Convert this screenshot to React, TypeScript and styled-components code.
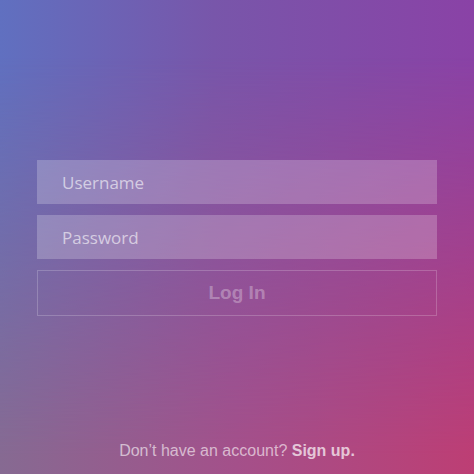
import styled, { createGlobalStyle } from 'styled-components';

const GlobalStyle = createGlobalStyle`
  html, body, #root {
    margin: 0;
    padding: 0;
    height: 100%;
  }
  body {
    font-family: 'Open Sans', 'Liberation Sans', sans-serif;
  }
`;

function App() {
  return (
    <>
      <GlobalStyle />
      <Screen>
        <Form onSubmit={(e) => e.preventDefault()}>
          <Field type='text' placeholder='Username' />
          <Field type='password' placeholder='Password' />
          <LoginButton type='submit'>Log In</LoginButton>
        </Form>
        <Footer>
          Don’t have an account? <strong>Sign up.</strong>
        </Footer>
      </Screen>
    </>
  );
}

const Screen = styled.div`
  position: relative;
  height: 100%;
  box-sizing: border-box;
  display: flex;
  flex-direction: column;
  align-items: center;
  padding: 160px 37px 14px;
  overflow: hidden;
  background: linear-gradient(to right, #6070c0 0%, #7856aa 45%, #8a42a6 100%);

  /* bottom row of the four-corner blend */
  &::before {
    content: '';
    position: absolute;
    inset: 0;
    background: linear-gradient(to right, #866a92 0%, #a4508a 50%, #bd3e74 100%);
    -webkit-mask-image: linear-gradient(to bottom, transparent 12%, black 96%);
    mask-image: linear-gradient(to bottom, transparent 12%, black 96%);
  }

  > * {
    position: relative;
  }
`;

const Form = styled.form`
  width: 100%;
  display: flex;
  flex-direction: column;
  gap: 11px;
  margin: 0;
`;

const Field = styled.input`
  box-sizing: border-box;
  width: 100%;
  height: 44px;
  border: 0;
  outline: none;
  padding: 0 25px;
  background: rgba(255, 255, 255, 0.22);
  color: #fff;
  font-family: 'Open Sans', 'Liberation Sans', sans-serif;
  font-size: 17px;

  &::placeholder {
    color: rgba(255, 255, 255, 0.6);
  }
`;

const LoginButton = styled.button`
  box-sizing: border-box;
  width: 100%;
  height: 46px;
  border: 1px solid rgba(255, 255, 255, 0.2);
  background: transparent;
  color: rgba(255, 255, 255, 0.3);
  font-family: 'Liberation Sans', Arial, sans-serif;
  font-weight: 700;
  font-size: 19px;
  cursor: pointer;
`;

const Footer = styled.p`
  margin: auto 0 0;
  font-family: 'Liberation Sans', Arial, sans-serif;
  font-size: 16px;
  color: rgba(255, 255, 255, 0.6);

  strong {
    font-weight: 700;
    color: rgba(255, 255, 255, 0.7);
  }
`;

export default App;
